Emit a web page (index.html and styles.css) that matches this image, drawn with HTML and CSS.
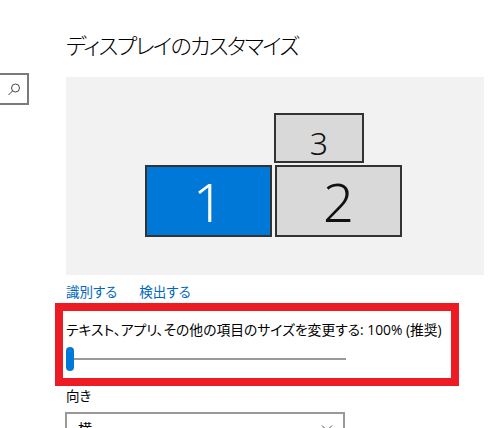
FILE: index.html
```html
<!DOCTYPE html>
<html lang="ja">
<head>
<meta charset="utf-8">
<link rel="stylesheet" href="styles.css">
</head>
<body>
<div class="page">
  <aside class="side">
    <div class="search">
      <svg class="search-icon" width="14" height="14" viewBox="0 0 14 14">
        <circle cx="8.5" cy="5" r="4" fill="none" stroke="#444" stroke-width="1"/>
        <line x1="5.6" y1="7.9" x2="1.5" y2="12" stroke="#444" stroke-width="1"/>
      </svg>
    </div>
  </aside>
  <main class="main">
    <h1 class="title">ディスプレイのカスタマイズ</h1>
    <div class="preview">
      <div class="mon mon3">3</div>
      <div class="mon mon1">1</div>
      <div class="mon mon2">2</div>
    </div>
    <div class="links">
      <a class="link">識別する</a>
      <a class="link">検出する</a>
    </div>
    <div class="highlight">
      <div class="scale-label">テキスト、アプリ、その他の項目のサイズを変更する: 100% (推奨)</div>
      <div class="slider">
        <div class="thumb"></div>
        <div class="track"></div>
      </div>
    </div>
    <div class="label">向き</div>
    <div class="select">
      <span class="select-text">横</span>
      <svg class="chev" width="12" height="8" viewBox="0 0 12 8">
        <polyline points="1,1.5 6,6.5 11,1.5" fill="none" stroke="#555" stroke-width="1"/>
      </svg>
    </div>
  </main>
</div>
</body>
</html>
```
FILE: styles.css
```css
html, body {
  margin: 0;
  padding: 0;
  background: #fff;
}
body {
  width: 500px;
  height: 428px;
  overflow: hidden;
  font-family: "Noto Sans CJK JP", "Noto Sans", sans-serif;
  color: #000;
  font-feature-settings: "palt";
}
.page {
  display: flex;
  align-items: flex-start;
}
.side {
  width: 29px;
  flex: none;
  padding-top: 73px;
}
.search {
  height: 28px;
  border: 2px solid #7a7a7a;
  border-left: none;
  display: flex;
  align-items: center;
  justify-content: flex-end;
  padding-right: 6px;
  box-sizing: content-box;
  width: 21px;
}
.search-icon {
  display: block;
  margin-top: 2px;
}
.main {
  margin-left: 37px;
  display: flex;
  flex-direction: column;
  align-items: flex-start;
}
.title {
  margin: 28px 0 17px;
  font-size: 22px;
  line-height: 32px;
  font-weight: 300;
  letter-spacing: -1.7px;
  white-space: nowrap;
}
.preview {
  position: relative;
  width: 418px;
  height: 198px;
  background: #f2f2f2;
}
.mon {
  position: absolute;
  box-sizing: border-box;
  border: 2px solid #333;
  background: #d9d9d9;
  color: #111;
  display: flex;
  align-items: center;
  justify-content: center;
  font-family: "Noto Sans", "DejaVu Sans", sans-serif;
  font-weight: 300;
  font-feature-settings: normal;
}
.mon3 {
  left: 208px;
  top: 36px;
  width: 90px;
  height: 50px;
  font-size: 32px;
  padding-top: 8px;
}
.mon1 {
  left: 79px;
  top: 88px;
  width: 127px;
  height: 72px;
  background: #0078d7;
  color: #fff;
  font-size: 54px;
}
.mon2 {
  left: 209px;
  top: 88px;
  width: 127px;
  height: 72px;
  font-size: 54px;
}
.links {
  display: flex;
  gap: 22px;
  margin-top: 6px;
  height: 20px;
  line-height: 20px;
  font-size: 13.5px;
}
.link {
  color: #0067c0;
  cursor: pointer;
}
.highlight {
  margin: 2px 0 0 -11px;
  width: 404px;
  box-sizing: border-box;
  border: 8px solid #ed1c24;
  padding: 9px 0 7px 3px;
}
.scale-label {
  font-family: "Open Sans", "Noto Sans CJK JP", sans-serif;
  font-size: 13.8px;
  line-height: 20px;
  white-space: nowrap;
}
.slider {
  margin-top: 7px;
  width: 280px;
  height: 24px;
  display: flex;
  align-items: center;
}
.thumb {
  width: 8px;
  height: 24px;
  border-radius: 4px;
  background: #0078d7;
  flex: none;
}
.track {
  flex: 1;
  height: 2px;
  background: #999;
}
.label {
  font-size: 13.5px;
  line-height: 18px;
}
.select {
  margin-top: 8px;
  margin-left: -1px;
  width: 280px;
  height: 32px;
  box-sizing: border-box;
  border: 2px solid #999;
  display: flex;
  align-items: center;
  justify-content: space-between;
  padding: 0 10px 0 11px;
}
.select-text {
  font-size: 14px;
  line-height: 20px;
}
.chev {
  display: block;
}
```
